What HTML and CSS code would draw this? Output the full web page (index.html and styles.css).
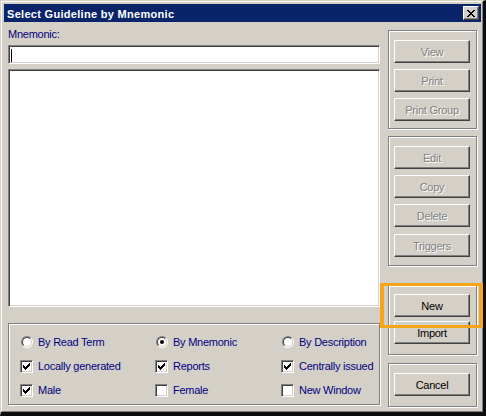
FILE: index.html
```html
<!DOCTYPE html>
<html>
<head>
<meta charset="utf-8">
<link rel="stylesheet" href="styles.css">
</head>
<body>
<div class="window">
  <div class="frame">
    <div class="titlebar">
      <span class="title-text">Select Guideline by Mnemonic</span>
      <div class="close">
        <svg width="8" height="7" viewBox="0 0 8 7" shape-rendering="crispEdges"><path fill="#000" d="M0 0h2v1h-2z M6 0h2v1h-2z M1 1h2v1h-2z M5 1h2v1h-2z M2 2h4v1h-4z M3 3h2v1h-2z M2 4h4v1h-4z M1 5h2v1h-2z M5 5h2v1h-2z M0 6h2v1h-2z M6 6h2v1h-2z"/></svg>
      </div>
    </div>
    <div class="client">
      <div class="left">
        <div class="label">Mnemonic:</div>
        <div class="field input"><span class="caret"></span></div>
        <div class="field list"></div>
        <div class="options">
          <div class="opt"><span class="radio"></span>By Read Term</div>
          <div class="opt"><span class="radio on"></span>By Mnemonic</div>
          <div class="opt"><span class="radio"></span>By Description</div>
          <div class="opt"><span class="chk"><svg width="11" height="11" viewBox="0 0 11 11" shape-rendering="crispEdges"><path fill="#000" d="M2 4h1v3h-1z M3 5h1v3h-1z M4 6h1v3h-1z M5 5h1v3h-1z M6 4h1v3h-1z M7 3h1v3h-1z M8 2h1v3h-1z"/></svg></span>Locally generated</div>
          <div class="opt"><span class="chk"><svg width="11" height="11" viewBox="0 0 11 11" shape-rendering="crispEdges"><path fill="#000" d="M2 4h1v3h-1z M3 5h1v3h-1z M4 6h1v3h-1z M5 5h1v3h-1z M6 4h1v3h-1z M7 3h1v3h-1z M8 2h1v3h-1z"/></svg></span>Reports</div>
          <div class="opt"><span class="chk"><svg width="11" height="11" viewBox="0 0 11 11" shape-rendering="crispEdges"><path fill="#000" d="M2 4h1v3h-1z M3 5h1v3h-1z M4 6h1v3h-1z M5 5h1v3h-1z M6 4h1v3h-1z M7 3h1v3h-1z M8 2h1v3h-1z"/></svg></span>Centrally issued</div>
          <div class="opt"><span class="chk"><svg width="11" height="11" viewBox="0 0 11 11" shape-rendering="crispEdges"><path fill="#000" d="M2 4h1v3h-1z M3 5h1v3h-1z M4 6h1v3h-1z M5 5h1v3h-1z M6 4h1v3h-1z M7 3h1v3h-1z M8 2h1v3h-1z"/></svg></span>Male</div>
          <div class="opt"><span class="chk"></span>Female</div>
          <div class="opt"><span class="chk"></span>New Window</div>
        </div>
      </div>
      <div class="right">
        <div class="group g1">
          <div class="btn dis">View</div>
          <div class="btn dis">Print</div>
          <div class="btn dis">Print Group</div>
        </div>
        <div class="group g2">
          <div class="btn dis">Edit</div>
          <div class="btn dis">Copy</div>
          <div class="btn dis">Delete</div>
          <div class="btn dis trig">Triggers</div>
        </div>
        <div class="group g3">
          <div class="btn">New</div>
          <div class="btn">Import</div>
        </div>
        <div class="group g4">
          <div class="btn">Cancel</div>
        </div>
      </div>
    </div>
  </div>
</div>
<div class="highlight"></div>
</body>
</html>
```
FILE: styles.css
```css
* { box-sizing: border-box; }
html, body { margin: 0; padding: 0; }
body {
  width: 486px;
  height: 416px;
  position: relative;
  overflow: hidden;
  background: #000;
  font-family: "Liberation Sans", Arial, sans-serif;
  font-size: 11px;
  letter-spacing: -0.25px;
}
.window {
  width: 486px;
  height: 416px;
  border-style: solid;
  border-width: 1px 3px 4px 1px;
  border-color: #d4d0c8 #0d0d0d #0d0d0d #d4d0c8;
  background: #d4d0c8;
}
.frame {
  height: 100%;
  border: 1px solid;
  border-color: #fff #808080 #808080 #fff;
  padding: 2px 1px 0 2px;
  display: flex;
  flex-direction: column;
}
.titlebar {
  height: 18px;
  flex: none;
  background: #0a246a;
  color: #fff;
  font-weight: bold;
  display: flex;
  align-items: center;
  justify-content: space-between;
  padding: 0 2px 0 3px;
}
.title-text { line-height: 18px; padding-top: 1px; letter-spacing: 0.3px; }
.close {
  width: 16px;
  height: 14px;
  background: #d4d0c8;
  border: 1px solid;
  border-color: #fff #404040 #404040 #fff;
  box-shadow: inset -1px -1px #808080;
  display: flex;
  align-items: center;
  justify-content: center;
}
.close svg { display: block; }
.client {
  flex: 1;
  display: flex;
  gap: 8px;
  padding: 0 4px;
}
.left {
  width: 372px;
  flex: none;
  display: flex;
  flex-direction: column;
}
.label {
  color: #000080;
  line-height: 13px;
  margin-top: 6px;
  margin-bottom: 4px;
}
.field {
  background: #fff;
  border: 1px solid;
  border-color: #808080 #fff #fff #808080;
  box-shadow: inset 1px 1px #404040, inset -1px -1px #d4d0c8;
}
.input {
  height: 19px;
  padding: 3px 0 0 2px;
}
.caret {
  display: block;
  width: 1px;
  height: 13px;
  background: #000;
}
.list {
  height: 238px;
  margin-top: 5px;
}
.options {
  margin-top: 16px;
  height: 82px;
  border: 1px solid #808080;
  box-shadow: inset 1px 1px #fff, 1px 1px #fff;
  padding: 6px 0 2px 11px;
  display: grid;
  grid-template-columns: 135px 126px 1fr;
  grid-auto-rows: 24px;
  color: #000080;
}
.opt {
  display: flex;
  align-items: center;
  white-space: nowrap;
}
.chk {
  width: 13px;
  height: 13px;
  flex: none;
  margin-right: 5px;
  background: #fff;
  border: 1px solid;
  border-color: #808080 #fff #fff #808080;
  box-shadow: inset 1px 1px #404040, inset -1px -1px #d4d0c8;
}
.chk svg { display: block; }
.radio {
  width: 12px;
  height: 12px;
  flex: none;
  margin: 0 5px 0 1px;
  border-radius: 50%;
  border: 1px solid;
  border-color: #808080 #fff #fff #808080;
  position: relative;
}
.radio::before {
  content: "";
  position: absolute;
  inset: 0;
  border-radius: 50%;
  border: 1px solid;
  border-color: #404040 #d4d0c8 #d4d0c8 #404040;
  background: #fff;
}
.radio.on::after {
  content: "";
  position: absolute;
  left: 3px;
  top: 3px;
  width: 4px;
  height: 4px;
  border-radius: 50%;
  background: #000;
}
.right {
  width: 89px;
  flex: none;
  display: flex;
  flex-direction: column;
  padding-top: 8px;
}
.group {
  border: 1px solid #808080;
  box-shadow: inset 1px 1px #fff, 1px 1px #fff;
  display: flex;
  flex-direction: column;
  padding-left: 5px;
  gap: 6px;
  flex: none;
}
.g1 { height: 99px; padding-top: 9px; }
.g2 { height: 130px; margin-top: 7px; padding-top: 9px; }
.g2 .trig { margin-top: 1px; }
.g3 { height: 70px; margin-top: 19px; padding-top: 8px; gap: 4px; }
.g4 { height: 44px; margin-top: 8px; padding-top: 9px; }
.btn {
  width: 76px;
  height: 23px;
  flex: none;
  border: 1px solid;
  border-color: #fff #404040 #404040 #fff;
  box-shadow: inset -1px -1px #808080;
  display: flex;
  align-items: center;
  justify-content: center;
  color: #000;
}
.btn.dis {
  color: #808080;
  text-shadow: 1px 1px 0 #fff;
}
.highlight {
  position: absolute;
  left: 380px;
  top: 283px;
  width: 103px;
  height: 45px;
  border-style: solid;
  border-width: 3px 4px;
  border-color: #f9a51a;
}
```
